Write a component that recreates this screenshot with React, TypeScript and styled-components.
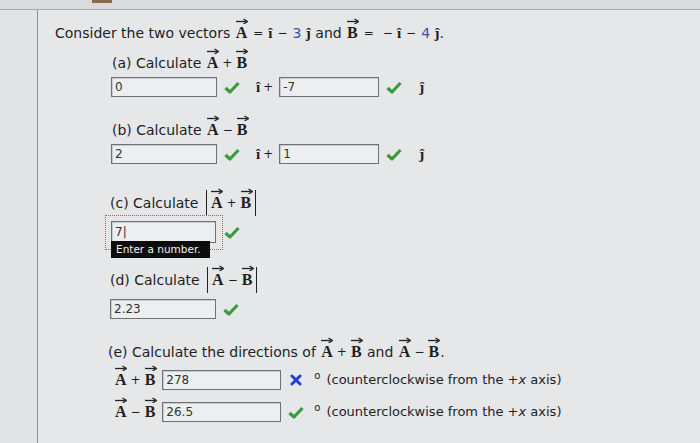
import * as React from 'react';
import styled, { createGlobalStyle } from 'styled-components';

const Global = createGlobalStyle`
  html, body {
    margin: 0;
    padding: 0;
    background: #e5e7e9;
  }
  body {
    font-family: "DejaVu Sans", Verdana, sans-serif;
    color: #1e1e1e;
  }
`;

const Page = styled.div`
  width: 700px;
  height: 443px;
  display: flex;
  flex-direction: column;
  overflow: hidden;
`;

const TopStrip = styled.div`
  height: 9px;
  flex-shrink: 0;
  background: #d9dbdd;
  border-bottom: 1px solid #a9acae;
  position: relative;
`;

const Tab = styled.div`
  position: absolute;
  left: 92px;
  top: 0;
  width: 20px;
  height: 3px;
  background: #8a6a48;
`;

const Body = styled.div`
  flex: 1;
  display: flex;
`;

const Gutter = styled.div`
  width: 37px;
  flex-shrink: 0;
  background: #e1e3e5;
  border-right: 1px solid #8d9093;
`;

const Main = styled.div`
  flex: 1;
  padding: 12px 0 0 17px;
  font-size: 14px;
  line-height: 18px;
`;

const Line = styled.div<{ $indent?: number; $top?: number }>`
  display: flex;
  align-items: center;
  white-space: pre;
  margin-left: ${(p) => p.$indent ?? 0}px;
  margin-top: ${(p) => p.$top ?? 0}px;
`;

const VecWrap = styled.span`
  position: relative;
  display: inline-block;
  font-family: "Liberation Serif", "Times New Roman", serif;
  font-weight: bold;
  font-size: 16px;
  padding: 0 1px;
`;

const Arrow = styled.svg`
  position: absolute;
  left: 1px;
  top: -6px;
  width: 12px;
  height: 6px;
`;

const Hat = styled.span`
  font-family: "Liberation Serif", "Times New Roman", serif;
  font-weight: bold;
  font-size: 15px;
`;

const Num = styled.span`
  color: #3a4fa8;
`;

const Op = styled.span<{ $r?: number; $p?: number }>`
  font-size: 12px;
  padding: 0 ${(p) => p.$p ?? 3}px;
  margin-right: ${(p) => p.$r ?? 0}px;
`;

const Abs = styled.span`
  display: inline-block;
  width: 0;
  height: 26px;
  border-left: 1px solid #222;
  margin: 0 3px;
`;

const Field = styled.input<{ $w: number; $h?: number }>`
  width: ${(p) => p.$w}px;
  height: ${(p) => p.$h ?? 20}px;
  box-sizing: border-box;
  border: 1px solid #6f7274;
  box-shadow: inset 1px 1px 0 #c8cacc;
  background: #eceeef;
  font-family: "DejaVu Sans", Verdana, sans-serif;
  font-size: 12px;
  color: #333;
  padding: 0 3px;
  margin: 0;
  outline: none;
`;

const Focus = styled.div`
  position: relative;
  border: 1px dotted #9a6a48;
  padding: 5px 6px 6px 5px;
  margin-left: -6px;
`;

const Tip = styled.div`
  position: absolute;
  left: 5px;
  top: 25px;
  width: 99px;
  height: 17px;
  background: #0c0c0c;
  color: #f2f2f2;
  font-size: 10.5px;
  line-height: 17px;
  text-indent: 5px;
`;

const Mark = styled.span<{ $l: number; $r: number }>`
  display: inline-flex;
  margin-left: ${(p) => p.$l}px;
  margin-right: ${(p) => p.$r}px;
`;

const Unit = styled.span`
  font-size: 13px;
  padding-left: 2px;
`;

const Deg = styled.span`
  font-size: 10px;
  margin-right: 4px;
  position: relative;
  top: -4px;
`;

const Vec = ({ s }: { s: string }) => (
  <VecWrap>
    <Arrow viewBox="0 0 12 6">
      <path d="M0 3.5 H10" stroke="#222" strokeWidth="1.3" />
      <path d="M7.5 1 L11.5 3.5 L7.5 6" fill="none" stroke="#222" strokeWidth="1.3" />
    </Arrow>
    {s}
  </VecWrap>
);

const Check = () => (
  <svg width="16" height="13" viewBox="0 0 16 13">
    <path d="M1.5 7 L6 11 L14.5 2" fill="none" stroke="#3a9a3c" strokeWidth="3.2" strokeLinejoin="round" />
  </svg>
);

const Cross = () => (
  <svg width="12" height="12" viewBox="0 0 12 12">
    <path d="M2 2 L10 10 M10 2 L2 10" stroke="#1f3fd0" strokeWidth="3" strokeLinecap="round" />
  </svg>
);

const I = () => <Hat>î</Hat>;
const J = () => <Hat>ĵ</Hat>;

const CompRow = ({ x, y, top }: { x: string; y: string; top: number }) => (
  <Line $indent={56} $top={top}>
    <Field $w={106} readOnly value={x} />
    <Mark $l={7} $r={16}><Check /></Mark>
    <I />
    <Op $r={3}>+</Op>
    <Field $w={100} readOnly value={y} />
    <Mark $l={7} $r={17}><Check /></Mark>
    <J />
  </Line>
);

export default function App() {
  return (
    <Page>
      <Global />
      <TopStrip>
        <Tab />
      </TopStrip>
      <Body>
        <Gutter />
        <Main>
          <Line $top={2}>
            {'Consider the two vectors '}
            <Vec s="A" />
            <Op $p={5}>=</Op>
            <I />
            <Op $p={5}>−</Op>
            <Num>3 </Num>
            <J />
            {' and '}
            <Vec s="B" />
            <Op $p={5}>=</Op>
            <Op $p={4}>−</Op>
            <I />
            <Op $p={5}>−</Op>
            <Num>4 </Num>
            <J />.
          </Line>

          <Line $indent={57} $top={12}>
            {'(a) Calculate '}
            <Vec s="A" />
            <Op>+</Op>
            <Vec s="B" />
          </Line>
          <CompRow x="0" y="-7" top={5} />

          <Line $indent={57} $top={24}>
            {'(b) Calculate '}
            <Vec s="A" />
            <Op>−</Op>
            <Vec s="B" />
          </Line>
          <CompRow x="2" y="1" top={5} />

          <Line $indent={55} $top={26}>
            {'(c) Calculate '}
            <Abs />
            <Vec s="A" />
            <Op>+</Op>
            <Vec s="B" />
            <Abs />
          </Line>
          <Line $indent={56} $top={-1}>
            <Focus>
              <Field $w={105} $h={22} readOnly value="7|" />
              <Tip>Enter a number.</Tip>
            </Focus>
            <Mark $l={1} $r={0}><Check /></Mark>
          </Line>

          <Line $indent={55} $top={17}>
            {'(d) Calculate '}
            <Abs />
            <Vec s="A" />
            <Op>−</Op>
            <Vec s="B" />
            <Abs />
          </Line>
          <Line $indent={55} $top={6}>
            <Field $w={106} readOnly value="2.23" />
            <Mark $l={7} $r={0}><Check /></Mark>
          </Line>

          <Line $indent={53} $top={24}>
            {'(e) Calculate the directions of '}
            <Vec s="A" />
            <Op>+</Op>
            <Vec s="B" />
            {' and '}
            <Vec s="A" />
            <Op>−</Op>
            <Vec s="B" />.
          </Line>
          <Line $indent={59} $top={9}>
            <Vec s="A" />
            <Op>+</Op>
            <Vec s="B" />
            <Mark $l={6} $r={0}>
              <Field $w={119} readOnly value="278" />
            </Mark>
            <Mark $l={9} $r={12}><Cross /></Mark>
            <Deg>o</Deg>
            <Unit>(counterclockwise from the +<i>x</i> axis)</Unit>
          </Line>
          <Line $indent={59} $top={12}>
            <Vec s="A" />
            <Op>−</Op>
            <Vec s="B" />
            <Mark $l={6} $r={0}>
              <Field $w={119} readOnly value="26.5" />
            </Mark>
            <Mark $l={7} $r={10}><Check /></Mark>
            <Deg>o</Deg>
            <Unit>(counterclockwise from the +<i>x</i> axis)</Unit>
          </Line>
        </Main>
      </Body>
    </Page>
  );
}
